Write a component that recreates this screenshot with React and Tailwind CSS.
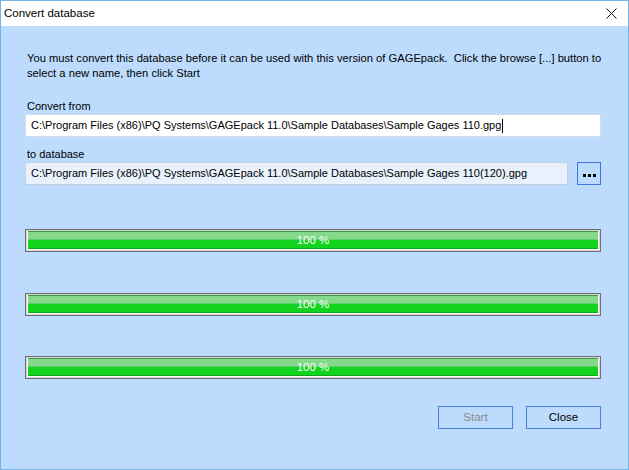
import React from "react";

const FONT = { fontFamily: '"Segoe UI", "Liberation Sans", Arial, sans-serif' };

function ProgressBar() {
    return (
        <div className="h-[23px] border border-[#6f6f6f] bg-[#d4d4d4] p-px">
            <div className="relative h-full bg-white px-px pb-px">
                <div className="h-full flex flex-col border-t border-[#3f9a48]">
                    <div className="h-[7px] bg-[#84d98b]"></div>
                    <div className="h-px bg-[#5fcf68]"></div>
                    <div className="flex-1 bg-[#12d41f] border-b border-[#0fa81a]"></div>
                </div>
                <div className="absolute inset-0 flex items-center justify-center text-white text-[11.5px] pt-px">
                    100 %
                </div>
            </div>
        </div>
    );
}

export default function App() {
    return (
        <div className="w-[629px] h-[470px] flex flex-col border border-[#74b4e6] text-[11px] text-black" style={FONT}>
            {/* barra de titulo */}
            <div className="h-[25px] bg-white flex items-center justify-between pl-[3px] pr-[11px] shrink-0 text-[11.5px]">
                <span>Convert database</span>
                <svg width="11" height="11" viewBox="0 0 11 11">
                    <path d="M0.5 0.5 L10.5 10.5 M10.5 0.5 L0.5 10.5" stroke="#111" strokeWidth="1" />
                </svg>
            </div>

            {/* cuerpo */}
            <div className="flex-1 bg-[#bddcfd] pl-[24px] pr-[27px] pt-[25px] flex flex-col">
                <p className="leading-[15px] pl-[2px] whitespace-nowrap text-[11.2px]">
                    You must convert this database before it can be used with this version of GAGEpack.&nbsp; Click the browse [...] button to
                    <br />
                    select a new name, then click Start
                </p>

                <div className="mt-[18px] leading-[15px] pl-[2px]">Convert from</div>
                <div className="h-[23px] bg-white border border-[#d7dde6] flex items-center pl-[5px] whitespace-nowrap">
                    C:\Program Files (x86)\PQ Systems\GAGEpack 11.0\Sample Databases\Sample Gages 110.gpg
                    <span className="inline-block w-px h-[14px] bg-black ml-px"></span>
                </div>

                <div className="mt-[10px] leading-[15px] pl-[2px]">to database</div>
                <div className="flex gap-[9px]">
                    <div className="flex-1 h-[23px] bg-[#e9f1fc] border border-[#c3cfdd] flex items-center pl-[5px] whitespace-nowrap">
                        C:\Program Files (x86)\PQ Systems\GAGEpack 11.0\Sample Databases\Sample Gages 110(120).gpg
                    </div>
                    <button className="w-[24px] h-[23px] border border-[#3f76d9] bg-[#bddcfd] flex items-center justify-center gap-[2px] pt-[3px]">
                        <span className="w-[3px] h-[3px] bg-black"></span>
                        <span className="w-[3px] h-[3px] bg-black"></span>
                        <span className="w-[3px] h-[3px] bg-black"></span>
                    </button>
                </div>

                {/* barras de progreso */}
                <div className="mt-[44px]"><ProgressBar /></div>
                <div className="mt-[41px]"><ProgressBar /></div>
                <div className="mt-[40px]"><ProgressBar /></div>

                {/* botones */}
                <div className="mt-[27px] flex justify-end gap-[13px]">
                    <button className="w-[75px] h-[23px] border border-[#4b7fdc] text-[#8a8a8a] text-[11.5px]">Start</button>
                    <button className="w-[75px] h-[23px] border border-[#4b7fdc] text-black text-[11.5px]">Close</button>
                </div>
            </div>
        </div>
    );
}
